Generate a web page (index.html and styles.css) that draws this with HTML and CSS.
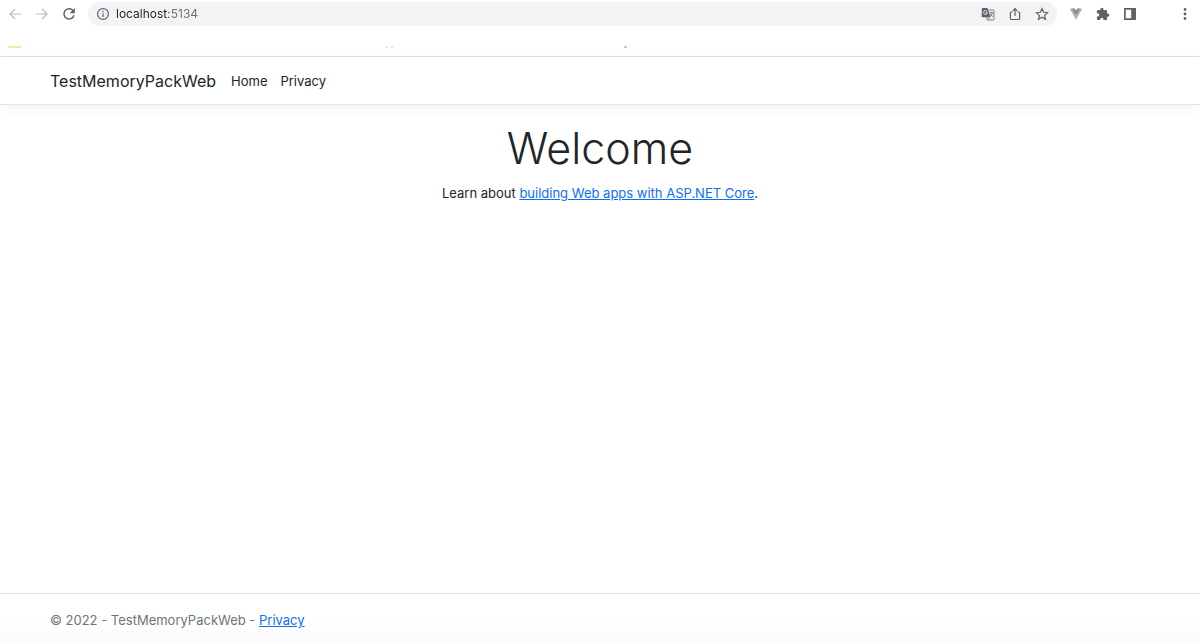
FILE: index.html
```html
<!DOCTYPE html>
<html lang="en">

<head>
    <meta charset="UTF-8">
    <meta name="viewport" content="width=device-width, initial-scale=1.0">
    <title>Home page - TestMemoryPackWeb</title>
    <link rel="stylesheet" href="styles.css">
</head>

<body>
    <div class="browser">
        <div class="toolbar">
            <div class="nav-buttons">
                <button type="button" class="icon-btn disabled" aria-label="Back">
                    <svg viewBox="0 0 14 14"><path d="M13 7H2M7 2L2 7l5 5" /></svg>
                </button>
                <button type="button" class="icon-btn disabled" aria-label="Forward">
                    <svg viewBox="0 0 14 14"><path d="M1 7h11M7 2l5 5-5 5" /></svg>
                </button>
                <button type="button" class="icon-btn reload" aria-label="Reload">
                    <svg viewBox="0 0 14 14"><path d="M11.5 4.4A5.1 5.1 0 1 0 12 8.2" /><path class="solid" d="M12.8 1v5.2H7.6z" /></svg>
                </button>
            </div>
            <div class="address-bar">
                <svg class="info" viewBox="0 0 14 14"><circle cx="7" cy="7" r="5.4" /><path d="M7 6.3v3.7M7 4v1.3" /></svg>
                <input type="text" class="url" aria-label="Address" value="localhost:5134">
                <div class="address-actions">
                    <button type="button" class="icon-btn" aria-label="Translate">
                        <svg viewBox="0 0 14 14">
                            <path class="thin" d="M7.5 3h4.7a.8.8 0 0 1 .8.8v8.4a.8.8 0 0 1-.8.8H6.4L5.4 10" />
                            <path class="solid" d="M1.5 1h5l3 9.3h-8A.8.8 0 0 1 .8 9.5V1.8A.8.8 0 0 1 1.500 1z" />
                            <path class="cut" d="M6 4.300a1.900 1.900 0 1 0 .4 1.500H4.700" />
                            <path class="thin" d="M8.400 5.700H12M10.200 4.900v.8M11.400 5.700c-.3 1.700-1.200 2.900-2.200 3.600M9.300 7l2.300 2.600M9 10.400L6.800 12.600" />
                        </svg>
                    </button>
                    <button type="button" class="icon-btn" aria-label="Share">
                        <svg viewBox="0 0 14 14"><path d="M4.500 5H3.300a.9.9 0 0 0-.9.9v5.700c0 .5.4.9.9.9h7.400c.5 0 .9-.4.9-.9V5.900a.9.9 0 0 0-.9-.9H9.500M7 9V1.600M4.700 3.800L7 1.500l2.300 2.300" /></svg>
                    </button>
                    <button type="button" class="icon-btn" aria-label="Bookmark this page">
                        <svg viewBox="0 0 14 14"><path d="M7 1.600l1.600 3.700 4 .4-3 2.700.9 3.900L7 10.200l-3.500 2.100.9-3.900-3-2.700 4-.4z" /></svg>
                    </button>
                </div>
            </div>
            <div class="extensions">
                <button type="button" class="icon-btn" aria-label="Vue devtools">
                    <svg viewBox="0 0 14 14"><path class="vue-outer" d="M.5 1.500h4L7 5.800l2.500-4.300h4L7 12.700z" /><path class="vue-inner" d="M3.200 1.500h2.500L7 3.700l1.300-2.200h2.500L7 8z" /></svg>
                </button>
                <button type="button" class="icon-btn" aria-label="Extensions">
                    <svg viewBox="0 0 14 14"><path class="solid" d="M11.800 6.500h-.7V4a1.100 1.100 0 0 0-1.100-1.100H7.500v-.6a1.600 1.600 0 0 0-3.200 0v.6H2A1.100 1.100 0 0 0 .9 4v2.300h.7a1.600 1.600 0 0 1 0 3.300H.9v2.300A1.100 1.100 0 0 0 2 13h2.300v-.7a1.600 1.600 0 0 1 3.200 0v.7H10a1.100 1.100 0 0 0 1.100-1.100V9.700h.7a1.600 1.600 0 0 0 0-3.200z" /></svg>
                </button>
                <button type="button" class="icon-btn" aria-label="Side panel">
                    <svg viewBox="0 0 14 14"><path class="solid" fill-rule="evenodd" d="M1 1h12v12H1zM2.700 2.700v8.600h5.500V2.700z" /></svg>
                </button>
            </div>
            <button type="button" class="icon-btn menu" aria-label="Menu">
                <svg viewBox="0 0 14 14"><circle class="solid" cx="7" cy="2.500" r="1.400" /><circle class="solid" cx="7" cy="7" r="1.400" /><circle class="solid" cx="7" cy="11.500" r="1.400" /></svg>
            </button>
        </div>
        <div class="bookmarks">
            <span class="folder"></span>
            <span class="ticks"></span>
            <span class="dot"></span>
        </div>
    </div>

    <header>
        <nav class="navbar container">
            <a class="navbar-brand" href="#">TestMemoryPackWeb</a>
            <a class="nav-link" href="#">Home</a>
            <a class="nav-link" href="#">Privacy</a>
        </nav>
    </header>

    <main class="container">
        <h1>Welcome</h1>
        <p>Learn about <a href="#">building Web apps with ASP.NET Core</a>.</p>
    </main>

    <footer>
        <div class="container">
            &copy; 2022 - TestMemoryPackWeb - <a href="#">Privacy</a>
        </div>
    </footer>
</body>

</html>
```
FILE: styles.css
```css
* {
    box-sizing: border-box;
}

body {
    display: flex;
    flex-direction: column;
    min-height: 100vh;
    margin: 0;
    font-family: Inter, "Liberation Sans", sans-serif;
    font-size: 13px;
    line-height: 20px;
    color: #212529;
    background-color: #fff;
}

a {
    color: #0d6efd;
}

.container {
    width: 100%;
    padding: 0 50px;
}

/* Browser bar */
.browser {
    border-bottom: 1px solid #dfe0e2;
}

.toolbar {
    display: flex;
    align-items: center;
    height: 27px;
    padding: 0 8px;
}

.nav-buttons,
.address-actions,
.extensions {
    display: flex;
    gap: 13px;
}

.icon-btn {
    width: 14px;
    height: 14px;
    padding: 0;
    border: none;
    background: none;
    color: #5f6368;
    cursor: pointer;
}

.icon-btn svg,
.info {
    display: block;
    width: 14px;
    height: 14px;
    fill: none;
    stroke: currentColor;
    stroke-width: 1.2;
}

.icon-btn.disabled {
    color: #babcbe;
}

.reload svg {
    stroke-width: 1.5;
}

.icon-btn .solid {
    fill: currentColor;
    stroke: none;
}

.icon-btn .thin {
    stroke-width: 0.8;
}

.icon-btn .cut {
    stroke: #f1f3f4;
    stroke-width: 0.9;
}

.vue-outer {
    fill: #b4b4b4;
    stroke: none;
}

.vue-inner {
    fill: #858585;
    stroke: none;
}

.address-bar {
    display: flex;
    flex: 1;
    align-items: center;
    height: 24px;
    margin-left: 12px;
    padding: 0 8px;
    border-radius: 12px;
    background-color: #f1f3f4;
}

.info {
    color: #5f6368;
}

/* host is dark, port is grey */
.url {
    flex: 1;
    min-width: 0;
    margin-left: 6px;
    padding: 0;
    border: none;
    outline: none;
    font-family: inherit;
    font-size: 12px;
    line-height: 16px;
    color: transparent;
    background-image: linear-gradient(to right, #202124 53px, #6b6f73 53px);
    -webkit-background-clip: text;
    background-clip: text;
}

.extensions {
    margin-left: 12px;
}

.menu {
    margin-left: 41px;
}

.bookmarks {
    display: flex;
    align-items: flex-end;
    height: 29px;
    padding: 0 8px 8px;
}

.folder {
    width: 13px;
    height: 2px;
    background-color: #f9e3ae;
}

.ticks {
    width: 7px;
    height: 2px;
    margin-left: 365px;
    border: solid #e3e3e7;
    border-width: 0 2px;
}

.dot {
    width: 3px;
    height: 2px;
    margin-left: 231px;
    background-color: #c5c6d4;
}

/* Site */
header {
    border-bottom: 1px solid #e3e5e8;
    box-shadow: 0 4px 12px rgba(0, 0, 0, 0.05);
}

.navbar {
    display: flex;
    align-items: center;
    height: 47px;
}

.navbar a {
    color: #212529;
    text-decoration: none;
}

.navbar .navbar-brand {
    margin-right: 15px;
    font-size: 16px;
}

.nav-link {
    margin-right: 13px;
}

main {
    flex: 1;
    text-align: center;
}

h1 {
    margin: 16px 0 7px;
    font-size: 43px;
    font-weight: 300;
    line-height: 55px;
}

p {
    margin: 0;
}

footer {
    padding-top: 4px;
    border-top: 1px solid #dee2e6;
    line-height: 44px;
    color: #6c757d;
    background-image: linear-gradient(#fff 24px, #fafafa);
}
```
